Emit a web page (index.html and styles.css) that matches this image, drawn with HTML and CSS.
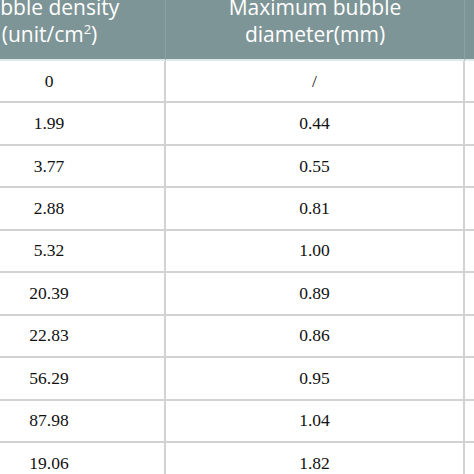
FILE: index.html
```html
<!DOCTYPE html>
<html>
<head>
<meta charset="utf-8">
<link rel="stylesheet" href="styles.css">
</head>
<body>
<div class="tbl">
  <div class="hd first">Bubble density<br>(unit/cm<sup>2</sup>)</div>
  <div class="hd">Maximum bubble<br>diameter(mm)</div>
  <div class="hd last"></div>

  <div class="c">0</div><div class="c">/</div><div class="c last"></div>
  <div class="c">1.99</div><div class="c">0.44</div><div class="c last"></div>
  <div class="c">3.77</div><div class="c">0.55</div><div class="c last"></div>
  <div class="c">2.88</div><div class="c">0.81</div><div class="c last"></div>
  <div class="c">5.32</div><div class="c">1.00</div><div class="c last"></div>
  <div class="c">20.39</div><div class="c">0.89</div><div class="c last"></div>
  <div class="c">22.83</div><div class="c">0.86</div><div class="c last"></div>
  <div class="c">56.29</div><div class="c">0.95</div><div class="c last"></div>
  <div class="c">87.98</div><div class="c">1.04</div><div class="c last"></div>
  <div class="c">19.06</div><div class="c">1.82</div><div class="c last"></div>
</div>
</body>
</html>
```
FILE: styles.css
```css
html, body {
  margin: 0;
  padding: 0;
  background: #ffffff;
  overflow: hidden;
  width: 474px;
  height: 474px;
}
.tbl {
  display: grid;
  grid-template-columns: 232px 299px 120px;
  margin: -6px 0 0 -66px;
  width: 651px;
}
.hd {
  background: #7e9597;
  color: #ffffff;
  font-family: "Open Sans", "Noto Sans", sans-serif;
  font-size: 21px;
  line-height: 27px;
  text-align: center;
  padding: 0 0 11px;
  border-right: 1px solid rgba(255,255,255,0.12);
  border-bottom: 2px solid #dfe8ea;
}
.hd.first {
  text-indent: -6px;
}
.hd sup {
  font-size: 13px;
  line-height: 0;
  vertical-align: 8px;
}
.c {
  font-family: "Liberation Serif", "Times New Roman", serif;
  font-size: 17.5px;
  color: #111111;
  height: 40.45px;
  display: flex;
  align-items: center;
  justify-content: center;
  border-right: 2px solid #d2d2d2;
  border-bottom: 2px solid #d2d2d2;
}
.last {
  border-right: none;
}
```
